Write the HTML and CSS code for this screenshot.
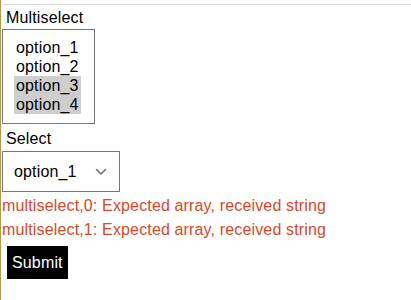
FILE: index.html
```html
<!DOCTYPE html>
<html>
<head>
<meta charset="utf-8">
<link rel="stylesheet" href="styles.css">
</head>
<body>
<div class="frame">
  <div class="topline"></div>
  <form class="form">
    <label class="label">Multiselect</label>
    <div class="listbox">
      <div class="opt">option_1</div>
      <div class="opt">option_2</div>
      <div class="opt sel">option_3</div>
      <div class="opt sel">option_4</div>
    </div>
    <label class="label label-select">Select</label>
    <div class="select">
      <span>option_1</span>
      <svg class="chev" width="12" height="8" viewBox="0 0 12 8"><path d="M1.5 1.5 L6 6 L10.5 1.5" fill="none" stroke="#707070" stroke-width="1.6" stroke-linecap="round" stroke-linejoin="round"/></svg>
    </div>
    <div class="errors">
      <div class="err">multiselect,0: Expected array, received string</div>
      <div class="err">multiselect,1: Expected array, received string</div>
    </div>
    <button type="button" class="submit">Submit</button>
  </form>
</div>
</body>
</html>
```

FILE: styles.css
```css
html, body {
  margin: 0;
  padding: 0;
  background: #fff;
}
.frame {
  width: 411px;
  height: 300px;
  box-sizing: border-box;
  border-left: 1px solid #b89a3a;
  font-family: "Liberation Sans", Arial, sans-serif;
  font-size: 16px;
  letter-spacing: 0.15px;
  color: #000;
}
.topline {
  height: 4px;
  margin-left: 3px;
  border-bottom: 1px solid #d8d8d8;
}
.form {
  display: flex;
  flex-direction: column;
  align-items: flex-start;
  padding-left: 1px;
}
.label {
  display: block;
  padding-left: 4px;
  line-height: 19px;
  margin-top: 3px;
  margin-bottom: 2px;
}
.label-select {
  margin-top: 5px;
  margin-bottom: 3px;
}
.listbox {
  width: 93px;
  height: 95px;
  box-sizing: border-box;
  border: 1px solid #767680;
  padding: 8px 0 0 11px;
}
.opt {
  display: inline-block;
  line-height: 19px;
  padding: 0 2px;
  vertical-align: top;
}
.sel {
  background: #cecece;
}
.select {
  width: 118px;
  height: 41px;
  box-sizing: border-box;
  border: 1px solid #767680;
  display: flex;
  align-items: center;
  justify-content: space-between;
  padding: 0 12px 0 11px;
}
.chev {
  display: block;
}
.errors {
  margin-top: 2px;
}
.err {
  color: #d9482a;
  line-height: 24px;
}
.submit {
  margin: 4px 0 0 5px;
  padding: 0 5px;
  height: 33px;
  background: #000;
  color: #fff;
  border: none;
  border-radius: 0;
  font-family: "Liberation Sans", Arial, sans-serif;
  font-size: 16px;
  letter-spacing: 0.15px;
}
```
